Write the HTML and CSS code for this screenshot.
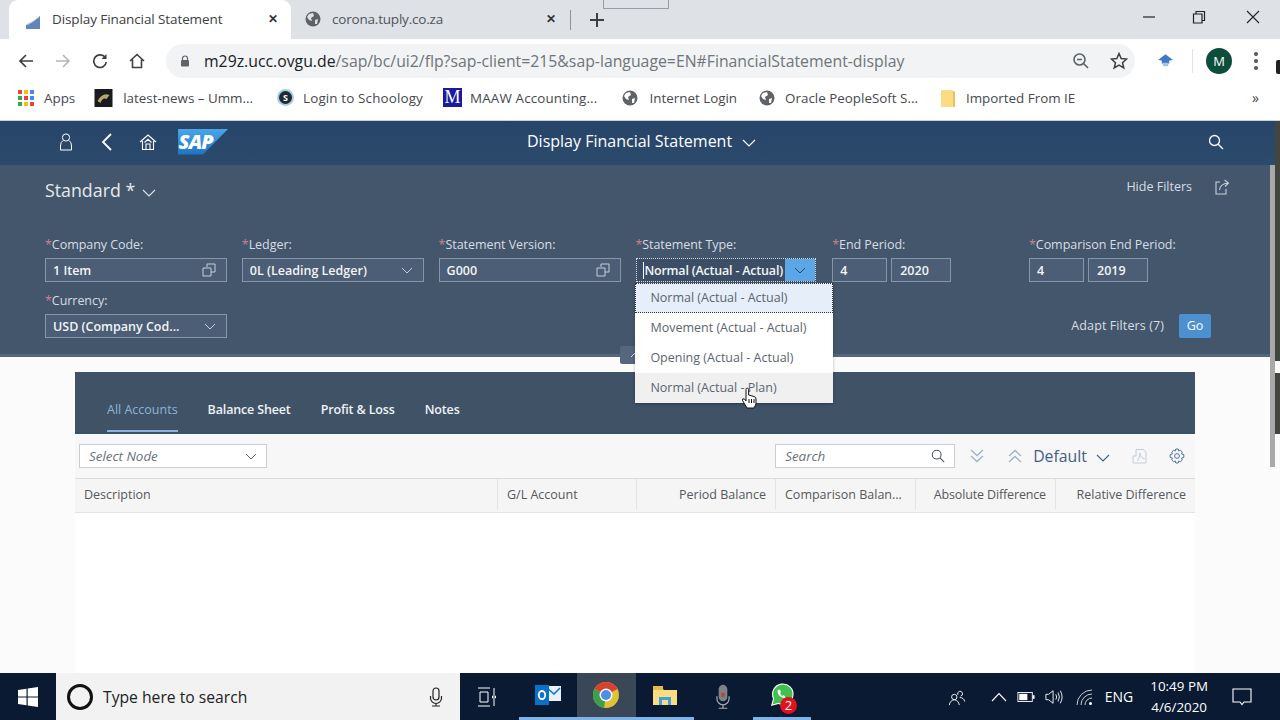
FILE: index.html
```html
<!DOCTYPE html>
<html lang="en">
<head>
    <meta charset="UTF-8">
    <title>Display Financial Statement</title>
    <link rel="stylesheet" href="styles.css">
</head>
<body>
    <div class="tabstrip">
        <div class="tab tab-active">
            <svg class="tab-icon" viewBox="0 0 16 16"><path d="M1 15 L15 15 L15 2 Q8 8 1 11 Z" fill="#5f86b8"/><path d="M2 11 Q8 8 14 3" stroke="#b9cbe0" fill="none"/></svg>
            <span class="tab-title">Display Financial Statement</span>
            <span class="tab-close">✕</span>
        </div>
        <div class="tab tab-other">
            <svg class="tab-icon globe" viewBox="0 0 16 16"><circle cx="8" cy="8" r="7.5" fill="#5f6368"/><path d="M4 3 L8 2 L9 5 L6 7 L7 10 L4 9 L2 6 Z M10 9 L13 8 L12 13 L10 13 Z" fill="#dee1e6"/></svg>
            <span class="tab-title dim">corona.tuply.co.za</span>
            <span class="tab-close">✕</span>
        </div>
        <div class="tab-sep"></div>
        <svg class="new-tab" viewBox="0 0 14 14"><path d="M7 0 V14 M0 7 H14" stroke="#3c4043" stroke-width="2"/></svg>
        <div class="drag-mark"></div>
        <div class="win-controls">
            <svg viewBox="0 0 14 14"><path d="M1 7 H13" stroke="#222" stroke-width="1.2"/></svg>
            <svg viewBox="0 0 14 14"><path d="M1.5 4 H10 V13 H1.5 Z M4 4 V1.5 H12.5 V10.5 H10" stroke="#222" stroke-width="1.2" fill="none"/></svg>
            <svg viewBox="0 0 14 14"><path d="M1 1 L13 13 M13 1 L1 13" stroke="#222" stroke-width="1.1"/></svg>
        </div>
    </div>

    <div class="toolbar">
        <svg class="nav-icon" viewBox="0 0 16 16"><path d="M15 8 H2 M8 2 L2 8 L8 14" stroke="#3c4043" stroke-width="1.7" fill="none"/></svg>
        <svg class="nav-icon" viewBox="0 0 16 16"><path d="M1 8 H14 M8 2 L14 8 L8 14" stroke="#b4b7bb" stroke-width="1.7" fill="none"/></svg>
        <svg class="nav-icon" viewBox="0 0 16 16"><path d="M13.5 5 A6.3 6.3 0 1 0 14.3 9" stroke="#3c4043" stroke-width="1.7" fill="none"/><path d="M14.5 1 V6 H9.5 Z" fill="#3c4043"/></svg>
        <svg class="nav-icon" viewBox="0 0 16 16"><path d="M1 8 L8 1.5 L15 8 M3.5 6.5 V14.5 H12.5 V6.5" stroke="#3c4043" stroke-width="1.6" fill="none"/></svg>
        <div class="omnibox">
            <svg class="lock" viewBox="0 0 10 12"><path d="M2.5 5 V3.5 A2.5 2.5 0 0 1 7.5 3.5 V5" stroke="#5f6368" stroke-width="1.2" fill="none"/><rect x="1" y="5" width="8" height="6.5" rx="1" fill="#5f6368"/></svg>
            <span class="url"><span class="host">m29z.ucc.ovgu.de</span>/sap/bc/ui2/flp?sap-client=215&amp;sap-language=EN#FinancialStatement-display</span>
            <svg class="omni-icon" viewBox="0 0 18 18"><circle cx="7.5" cy="7.5" r="5.5" stroke="#5f6368" stroke-width="1.6" fill="none"/><path d="M5 7.5 H10 M11.5 11.5 L16 16" stroke="#5f6368" stroke-width="1.6"/></svg>
            <svg class="omni-icon" viewBox="0 0 18 18"><path d="M9 1.5 L11.2 6.6 L16.6 7.1 L12.5 10.7 L13.8 16 L9 13.2 L4.2 16 L5.5 10.7 L1.4 7.1 L6.8 6.6 Z" stroke="#3c4043" stroke-width="1.5" fill="none"/></svg>
        </div>
        <svg class="ext-icon" viewBox="0 0 16 16"><path d="M8 2 L15 7.5 L11.5 8 V11 H4.5 V8 L1 7.5 Z" fill="#3f78c9"/><path d="M4.5 10 H11.5 L10 13.5 H6 Z" fill="#a5c4ea"/></svg>
        <div class="toolbar-sep"></div>
        <div class="avatar">M</div>
        <div class="kebab"><i></i><i></i><i></i></div>
    </div>

    <div class="bookmarks">
        <div class="bm bm-apps">
            <div class="apps-grid"><i class="c1"></i><i class="c2"></i><i class="c3"></i><i class="c4"></i><i class="c5"></i><i class="c6"></i><i class="c7"></i><i class="c2"></i><i class="c8"></i></div>
            <span>Apps</span>
        </div>
        <div class="bm bm-news">
            <svg class="bm-icon" viewBox="0 0 18 18"><rect width="18" height="18" fill="#1a1a22"/><path d="M3 12 Q8 3 15 6 L12 10 Q8 8 6 14 Z" fill="#b5a868"/></svg>
            <span>latest-news – Umm...</span>
        </div>
        <div class="bm bm-school">
            <div class="schoology">S</div>
            <span>Login to Schoology</span>
        </div>
        <div class="bm bm-maaw">
            <div class="maaw">M</div>
            <span>MAAW Accounting...</span>
        </div>
        <div class="bm bm-login">
            <svg class="bm-icon globe" viewBox="0 0 16 16"><circle cx="8" cy="8" r="7.5" fill="#5f6368"/><path d="M4 3 L8 2 L9 5 L6 7 L7 10 L4 9 L2 6 Z M10 9 L13 8 L12 13 L10 13 Z" fill="#fff"/></svg>
            <span>Internet Login</span>
        </div>
        <div class="bm">
            <svg class="bm-icon globe" viewBox="0 0 16 16"><circle cx="8" cy="8" r="7.5" fill="#5f6368"/><path d="M4 3 L8 2 L9 5 L6 7 L7 10 L4 9 L2 6 Z M10 9 L13 8 L12 13 L10 13 Z" fill="#fff"/></svg>
            <span>Oracle PeopleSoft S...</span>
        </div>
        <div class="bm">
            <svg class="bm-icon folder" viewBox="0 0 14 18"><path d="M0 1 H10 L14 3 V18 H0 Z" fill="#fbdc83"/><path d="M10 1 L14 3 V18 H12 V3 Z" fill="#e9c25d"/></svg>
            <span>Imported From IE</span>
        </div>
        <div class="bm-more">»</div>
    </div>

    <div class="app">
        <header class="shell">
            <div class="shell-left">
                <svg class="shell-icon" viewBox="0 0 16 20"><circle cx="8" cy="5.5" r="3.6" stroke="#fff" fill="none"/><path d="M5 8.5 Q2.5 10 2.5 14 V18 H13.5 V14 Q13.5 10 11 8.5" stroke="#fff" fill="none"/></svg>
                <svg class="shell-icon" viewBox="0 0 16 20"><path d="M12 2 L4 10 L12 18" stroke="#fff" stroke-width="1.8" fill="none"/></svg>
                <svg class="shell-icon home" viewBox="0 0 18 18"><path d="M1 9 L9 2 L17 9 M3.5 8 V16.5 H14.5 V8 M7 16.5 V11 H11 V16.5 M5.5 9.5 L9 6.3 L12.5 9.5" stroke="#fff" stroke-width="1.1" fill="none"/></svg>
                <div class="sap-logo"><span>SAP</span></div>
            </div>
            <div class="shell-title">Display Financial Statement
                <svg class="chev-lg" viewBox="0 0 14 8"><path d="M1 1 L7 7 L13 1" stroke="#fff" stroke-width="1.2" fill="none"/></svg>
            </div>
            <svg class="shell-search" viewBox="0 0 16 16"><circle cx="6.5" cy="6.5" r="5" stroke="#fff" stroke-width="1.3" fill="none"/><path d="M10.2 10.2 L15 15" stroke="#fff" stroke-width="1.3"/></svg>
        </header>

        <section class="filterbar">
            <div class="filter-top">
                <div class="variant">Standard *
                    <svg class="chev-lg" viewBox="0 0 14 8"><path d="M1 1 L7 7 L13 1" stroke="#dfe5ec" stroke-width="1.1" fill="none"/></svg>
                </div>
                <div class="filter-actions">
                    <span>Hide Filters</span>
                    <svg class="share" viewBox="0 0 16 16"><path d="M6 3 H2 V15 H12 V10" stroke="#c6d0da" stroke-width="1.1" fill="none"/><path d="M5.5 11 Q6 5 14 4 M10.5 1 L14.5 4 L11 7.5" stroke="#c6d0da" stroke-width="1.1" fill="none"/></svg>
                </div>
            </div>
            <div class="filter-grid">
                <div class="field">
                    <label><b>*</b>Company Code:</label>
                    <div class="input"><span class="val">1 Item</span>
                        <svg class="value-help" viewBox="0 0 14 14"><path d="M5 4 V1 H13 V9 H9 M1 5 H9 V13 H1 Z" stroke="#c6d0da" fill="none"/></svg>
                    </div>
                </div>
                <div class="field">
                    <label><b>*</b>Ledger:</label>
                    <div class="input"><span class="val">0L (Leading Ledger)</span>
                        <svg class="chev" viewBox="0 0 12 7"><path d="M1 1 L6 6 L11 1" stroke="#c6d0da" fill="none"/></svg>
                    </div>
                </div>
                <div class="field">
                    <label><b>*</b>Statement Version:</label>
                    <div class="input"><span class="val">G000</span>
                        <svg class="value-help" viewBox="0 0 14 14"><path d="M5 4 V1 H13 V9 H9 M1 5 H9 V13 H1 Z" stroke="#c6d0da" fill="none"/></svg>
                    </div>
                </div>
                <div class="field">
                    <label><b>*</b>Statement Type:</label>
                    <div class="input input-open"><span class="val">Normal (Actual - Actual)</span>
                        <span class="open-btn"><svg class="chev" viewBox="0 0 12 7"><path d="M1 1 L6 6 L11 1" stroke="#24476b" fill="none"/></svg></span>
                    </div>
                    <ul class="dropdown">
                        <li class="selected">Normal (Actual - Actual)</li>
                        <li>Movement (Actual - Actual)</li>
                        <li>Opening (Actual - Actual)</li>
                        <li class="hovered">Normal (Actual - Plan)</li>
                    </ul>
                </div>
                <div class="field">
                    <label><b>*</b>End Period:</label>
                    <div class="pair">
                        <div class="input small"><span class="val">4</span></div>
                        <div class="input wide"><span class="val">2020</span></div>
                    </div>
                </div>
                <div class="field">
                    <label><b>*</b>Comparison End Period:</label>
                    <div class="pair">
                        <div class="input small"><span class="val">4</span></div>
                        <div class="input wide"><span class="val">2019</span></div>
                    </div>
                </div>
                <div class="field">
                    <label><b>*</b>Currency:</label>
                    <div class="input"><span class="val">USD (Company Cod...</span>
                        <svg class="chev" viewBox="0 0 12 7"><path d="M1 1 L6 6 L11 1" stroke="#c6d0da" fill="none"/></svg>
                    </div>
                </div>
                <div class="go-wrap">
                    <span class="adapt">Adapt Filters (7)</span>
                    <span class="go-btn">Go</span>
                </div>
            </div>
        </section>
        <div class="collapse-tab">
            <svg viewBox="0 0 10 6"><path d="M1 5 L5 1 L9 5" stroke="#d7dee6" fill="none"/></svg>
        </div>

        <main class="content">
            <div class="panel">
                <nav class="tabs">
                    <span class="obj-tab current">All Accounts</span>
                    <span class="obj-tab">Balance Sheet</span>
                    <span class="obj-tab">Profit &amp; Loss</span>
                    <span class="obj-tab">Notes</span>
                </nav>
                <div class="table-tools">
                    <div class="tool-input node"><em>Select Node</em>
                        <svg class="chev" viewBox="0 0 12 7"><path d="M1 1 L6 6 L11 1" stroke="#5c6670" fill="none"/></svg>
                    </div>
                    <div class="tool-right">
                        <div class="tool-input search"><em>Search</em>
                            <svg class="search-icon" viewBox="0 0 16 16"><circle cx="6.5" cy="6.5" r="5" stroke="#4a5560" stroke-width="1.2" fill="none"/><path d="M10.2 10.2 L15 15" stroke="#4a5560" stroke-width="1.2"/></svg>
                        </div>
                        <svg class="tool-icon expand" viewBox="0 0 16 16"><path d="M2 2 L8 7.5 L14 2 M2 8 L8 13.5 L14 8" stroke="#9db3c9" stroke-width="1.3" fill="none"/></svg>
                        <svg class="tool-icon collapse" viewBox="0 0 16 16"><path d="M2 8 L8 2.5 L14 8 M2 14 L8 8.5 L14 14" stroke="#9db3c9" stroke-width="1.3" fill="none"/></svg>
                        <span class="default-view">Default
                            <svg class="chev-lg" viewBox="0 0 14 8"><path d="M1 1 L7 7 L13 1" stroke="#3f6188" stroke-width="1.1" fill="none"/></svg>
                        </span>
                        <svg class="tool-icon pdf" viewBox="0 0 16 16"><path d="M5 8 V1.5 H12 L15 4 V15 H2 V8 Z" stroke="#c3ced9" fill="none"/><path d="M6 13 Q9 10 9 5 Q9 10 14 11" stroke="#c3ced9" fill="none"/></svg>
                        <svg class="tool-icon gear" viewBox="0 0 16 16"><circle cx="8" cy="8" r="2.4" stroke="#4f7299" fill="none"/><path d="M6.8 1 H9.2 L9.7 3 L11.5 2.3 L13.3 4 L12.5 5.9 L14.8 6.6 V9.4 L12.5 10.1 L13.3 12 L11.5 13.7 L9.7 13 L9.2 15 H6.8 L6.3 13 L4.5 13.7 L2.7 12 L3.5 10.1 L1.2 9.4 V6.6 L3.5 5.9 L2.7 4 L4.5 2.3 L6.3 3 Z" stroke="#4f7299" fill="none"/></svg>
                    </div>
                </div>
                <div class="thead">
                    <div class="th c-desc">Description</div>
                    <div class="th c-gl">G/L Account</div>
                    <div class="th c-gl end">Period Balance</div>
                    <div class="th c-num">Comparison Balan...</div>
                    <div class="th c-num end tight">Absolute Difference</div>
                    <div class="th c-gl end last">Relative Difference</div>
                </div>
                <div class="tbody"></div>
            </div>
        </main>
        <div class="scrollbar"></div>
        <div class="edge-strip edge-top"></div>
        <div class="edge-strip edge-mid"></div>
    </div>

    <footer class="taskbar">
        <div class="start">
            <svg viewBox="0 0 20 20"><path d="M0 3 L8.5 1.8 V9.5 H0 Z M9.7 1.6 L20 0 V9.5 H9.7 Z M0 10.5 H8.5 V18.2 L0 17 Z M9.7 10.5 H20 V20 L9.7 18.4 Z" fill="#fff"/></svg>
        </div>
        <div class="task-search">
            <div class="cortana"></div>
            <span class="task-search-text">Type here to search</span>
            <svg class="mic" viewBox="0 0 14 20"><rect x="4" y="1" width="6" height="12" rx="3" stroke="#222" stroke-width="1.2" fill="none"/><path d="M1.5 9 V11 A5.5 5.5 0 0 0 12.5 11 V9 M7 16 V19 M3 19 H11" stroke="#222" stroke-width="1.2" fill="none"/></svg>
        </div>
        <div class="task-apps">
            <div class="task-app task-view">
                <svg viewBox="0 0 20 20"><path d="M1 1 H13 M1 19 H13 M3 5 H11 V15 H3 Z M17 1 V8 M17 12 V19 M15.5 9 H18.5 V11 H15.5 Z" stroke="#fff" fill="none"/></svg>
            </div>
            <div class="task-app running">
                <svg viewBox="0 0 26 24"><rect x="11" y="3" width="15" height="15" fill="#e6f1fb"/><path d="M12 5 L19 11 L25 5" stroke="#0a72c6" fill="none" stroke-width="1.5"/><rect x="0" y="2" width="14" height="20" fill="#0a72c6"/><ellipse cx="7" cy="12" rx="3.2" ry="4" stroke="#fff" stroke-width="1.8" fill="none"/></svg>
            </div>
            <div class="task-app running active">
                <svg viewBox="0 0 26 26"><circle cx="13" cy="13" r="13" fill="#e0c13a"/><path d="M13 13 L1.5 7 A13 13 0 0 1 24.5 7 Z" fill="#d8412f"/><path d="M13 13 L1.5 7 A13 13 0 0 0 11 26 Z" fill="#3c9f4d"/><circle cx="13" cy="13" r="6.5" fill="#fff"/><circle cx="13" cy="13" r="5" fill="#4b8fe8"/></svg>
            </div>
            <div class="task-app running">
                <svg viewBox="0 0 26 24"><path d="M1 5 H10 L12 7 H25 V22 H1 Z" fill="#fbdc83"/><rect x="1" y="3" width="10" height="4" fill="#e6bb4d"/><path d="M7 22 V14 H19 V22 H16 V17 H10 V22 Z" fill="#3da2dd"/></svg>
            </div>
            <div class="task-app">
                <svg viewBox="0 0 18 30"><rect x="4" y="1" width="10" height="19" rx="5" fill="#7b818a"/><rect x="7" y="10" width="4" height="5" fill="#b5482c"/><path d="M2 14 V17 A7 7 0 0 0 16 17 V14 M9 24 V28 M4 28 H14" stroke="#a8adb3" stroke-width="1.4" fill="none"/></svg>
            </div>
            <div class="task-app running">
                <svg viewBox="0 0 28 28"><path d="M3 25 L5 18 A11 11 0 1 1 10 23 Z" fill="#3fc04f" stroke="#fff" stroke-width="1.2"/><path d="M9 9 Q10 18 18 17 L16 14 L14 15 L12 12 L13 10 L11 8 Z" fill="#fff"/></svg>
                <span class="task-badge">2</span>
            </div>
        </div>
        <div class="tray">
            <svg class="tray-icon people" viewBox="0 0 20 20"><circle cx="7" cy="10" r="3" stroke="#fff" fill="none"/><path d="M1.5 19 Q2 14 7 13 Q12 14 12.5 19 M11 7.5 A2.7 2.7 0 1 1 14 9 M13 10.5 Q18 11 18.5 15" stroke="#fff" fill="none"/></svg>
            <svg class="tray-icon caret" viewBox="0 0 16 10"><path d="M1 9 L8 1.5 L15 9" stroke="#fff" stroke-width="1.1" fill="none"/></svg>
            <svg class="tray-icon battery" viewBox="0 0 20 12"><rect x="1" y="1" width="16" height="10" stroke="#fff" fill="none"/><rect x="2.5" y="2.5" width="9" height="7" fill="#fff"/><rect x="17.5" y="4" width="2" height="4" fill="#fff"/></svg>
            <svg class="tray-icon volume" viewBox="0 0 20 18"><path d="M1 6 H4 L9 2 V16 L4 12 H1 Z" stroke="#fff" fill="none"/><path d="M12 6 Q14 9 12 12 M14.5 4 Q17.5 9 14.5 14 M17 2 Q21 9 17 16" stroke="#fff" fill="none"/></svg>
            <svg class="tray-icon wifi" viewBox="0 0 18 18"><path d="M2 17 A15 15 0 0 1 17 2 M6 17 A11 11 0 0 1 17 6 M10 17 A7 7 0 0 1 17 10" stroke="#c8ccd2" fill="none"/><circle cx="15.5" cy="15.5" r="1.5" fill="#fff"/></svg>
            <span class="lang">ENG</span>
            <div class="clock"><span>10:49 PM</span><span>4/6/2020</span></div>
            <svg class="tray-icon notif" viewBox="0 0 20 18"><path d="M1 1 H19 V14 H12 L10 16.5 L8 14 H1 Z" stroke="#fff" stroke-width="1.1" fill="none"/></svg>
        </div>
    </footer>

    <!-- things that lie over the page -->
    <svg class="hand-cursor" viewBox="0 0 16 22"><path d="M5 10 V2.5 A1.3 1.3 0 0 1 7.6 2.5 V8 L13 9.5 Q15 10 15 12 V17 L13 21 H6 L1.5 13.5 Q1 11 3.5 12 L5 14 Z" fill="#fff" stroke="#111"/><path d="M8 12 V16 M10.5 12 V16 M13 12 V16" stroke="#111"/></svg>
    <div class="mouse-blip"></div>
</body>
</html>
```

FILE: styles.css
```css
* {
    margin: 0;
    padding: 0;
    box-sizing: border-box;
}

body {
    position: relative;
    display: flex;
    flex-direction: column;
    width: 1280px;
    height: 720px;
    overflow: hidden;
    background: #fff;
    font-family: "Open Sans", "Noto Sans", sans-serif;
    color: #3c4043;
}

/* browser chrome */
.tabstrip {
    position: relative;
    display: flex;
    align-items: center;
    height: 39px;
    background: #dee1e6;
    padding-left: 9px;
}

.tab {
    display: flex;
    align-items: center;
    width: 282px;
    height: 39px;
    padding: 0 13px 2px 16px;
    font-size: 13.5px;
}

.tab-active {
    background: #fff;
    border-radius: 9px 9px 0 0;
}

.tab-other {
    width: 280px;
    padding: 0 15px 2px 14px;
}

.tab-icon {
    width: 16px;
    height: 16px;
    margin-right: 11px;
    flex: none;
}

.tab-active .tab-icon {
    margin-top: 7px;
}

.tab-title {
    flex: 1;
    letter-spacing: -0.1px;
}

.tab-title.dim {
    color: #50545a;
    letter-spacing: -0.2px;
}

.tab-close {
    font-size: 12px;
    font-weight: 700;
    color: #333;
}

.tab-sep {
    width: 1px;
    height: 20px;
    background: #8e9196;
    margin-left: -1px;
}

.new-tab {
    width: 14px;
    height: 14px;
    margin-left: 19px;
}

.drag-mark {
    position: absolute;
    left: 603px;
    top: 0;
    width: 66px;
    height: 9px;
    border: 1px solid #9a9da3;
    border-top: 0;
}

.win-controls {
    display: flex;
    gap: 38px;
    margin-left: auto;
    margin-right: 20px;
    margin-top: -5px;
}

.win-controls svg {
    width: 14px;
    height: 14px;
}

.win-controls svg:nth-child(2) {
    margin: 0 2px 0 -2px;
}

.toolbar {
    display: flex;
    align-items: center;
    height: 43px;
    background: #fff;
    padding-left: 18px;
}

.nav-icon {
    width: 16px;
    height: 16px;
    margin-right: 21px;
    flex: none;
}

.omnibox {
    display: flex;
    align-items: center;
    width: 969px;
    height: 34px;
    background: #f1f3f4;
    border-radius: 17px;
    padding: 0 7px 0 14px;
}

.lock {
    width: 10px;
    height: 12px;
    margin-right: 14px;
}

.url {
    flex: 1;
    font-size: 15.8px;
    color: #70757a;
    white-space: nowrap;
}

.host {
    color: #202124;
}

.omni-icon {
    width: 18px;
    height: 18px;
    margin-left: 20px;
}

.ext-icon {
    width: 17px;
    height: 17px;
    margin-left: 22px;
}

.toolbar-sep {
    width: 1px;
    height: 24px;
    background: #e0e2e5;
    margin-left: 18px;
}

.avatar {
    width: 26px;
    height: 26px;
    margin-left: 13px;
    border-radius: 50%;
    background: #0d4d3c;
    color: #fff;
    font-size: 13px;
    text-align: center;
    line-height: 26px;
}

.kebab {
    display: flex;
    flex-direction: column;
    gap: 3px;
    margin-left: 22px;
}

.kebab i {
    width: 4px;
    height: 4px;
    border-radius: 50%;
    background: #555;
}

.bookmarks {
    display: flex;
    align-items: center;
    height: 39px;
    background: #fff;
    padding: 0 0 7px 18px;
    font-size: 13.4px;
    color: #45494e;
    border-bottom: 1px solid #c9d2dc;
}

.bm {
    display: flex;
    align-items: center;
    gap: 10px;
    margin-right: 22px;
}

.bm-apps {
    margin-right: 19px;
}

.bm-news {
    margin-right: 24px;
}

.bm-school {
    gap: 9px;
    margin-right: 20px;
    letter-spacing: 0.15px;
}

.bm-maaw {
    gap: 8px;
    margin-right: 25px;
    letter-spacing: 0.15px;
}

.bm-login {
    gap: 11px;
}

.apps-grid {
    display: grid;
    grid-template-columns: repeat(3, 4px);
    gap: 2px;
}

.apps-grid i {
    width: 4px;
    height: 4px;
}

.c1 { background: #ea4335; }
.c2 { background: #fbbc05; }
.c3 { background: #4285f4; }
.c4 { background: #34a853; }
.c5 { background: #ea4335; }
.c6 { background: #4285f4; }
.c7 { background: #34a853; }
.c8 { background: #ea4335; }

.bm-icon {
    width: 19px;
    height: 18px;
}

.bm-icon.globe {
    width: 16px;
    height: 16px;
}

.bm-icon.folder {
    width: 16px;
    height: 18px;
}

.schoology {
    width: 17px;
    height: 17px;
    border-radius: 50%;
    background: #1f2a33;
    border: 2px solid #9fd0e8;
    color: #fff;
    font-size: 9px;
    font-weight: 700;
    line-height: 13px;
    text-align: center;
}

.maaw {
    width: 19px;
    height: 19px;
    background: #1a1aa0;
    color: #fff;
    font-family: "Liberation Serif", serif;
    font-size: 18px;
    line-height: 19px;
    text-align: center;
}

.bm-more {
    margin-left: auto;
    margin-right: 21px;
    font-size: 14px;
}

/* fiori app */
.app {
    position: relative;
    flex: 1;
    min-height: 0;
    font-size: 12.5px;
    background: #fbfbfb;
}

.shell {
    display: flex;
    align-items: center;
    height: 44px;
    padding: 0 56px 5px 58px;
    background: linear-gradient(#264568, #2c4a6c);
    color: #fff;
}

.shell-left {
    display: flex;
    align-items: center;
    gap: 24.5px;
    width: 280px;
    margin-top: 2px;
}

.shell-icon {
    width: 16px;
    height: 20px;
}

.shell-icon.home {
    width: 18px;
    height: 18px;
}

.sap-logo {
    flex: none;
    width: 51px;
    height: 26px;
    margin-left: -4px;
    background: linear-gradient(#4aa6e8, #1c74c4);
    clip-path: polygon(0 0, 100% 0, 50% 100%, 0 100%);
    color: #fff;
    font-size: 20px;
    font-weight: 800;
    font-style: italic;
    line-height: 26px;
    padding-left: 1px;
    letter-spacing: -0.8px;
}

.shell-title {
    flex: 1;
    padding-left: 189px;
    font-size: 16px;
}

.chev-lg {
    width: 14px;
    height: 8px;
    margin-left: 6px;
}

.shell-search {
    width: 16px;
    height: 16px;
    margin-top: 2px;
}

.filterbar {
    height: 192px;
    padding: 0 0 0 45px;
    background: #44566b;
    border-bottom: 3px solid #54677e;
    color: #e2e7ec;
}

.filter-top {
    display: flex;
    justify-content: space-between;
    align-items: center;
    height: 50px;
    width: 1185px;
}

.variant {
    font-size: 17.8px;
    color: #e6eaee;
}

.variant .chev-lg {
    margin-left: 2px;
}

.filter-actions {
    display: flex;
    align-items: center;
    gap: 22px;
    margin-top: -7px;
    color: #d7dee6;
}

.share {
    width: 16px;
    height: 16px;
}

.filter-grid {
    display: grid;
    grid-template-columns: repeat(6, 182px);
    column-gap: 14.8px;
    row-gap: 11px;
    margin-top: 22px;
}

.field {
    position: relative;
}

.field label {
    display: block;
    height: 21px;
    line-height: 15px;
    color: #d6dde5;
    white-space: nowrap;
    letter-spacing: -0.05px;
}

.field label b {
    color: #cf7f8e;
    font-weight: 400;
}

.input {
    display: flex;
    align-items: center;
    justify-content: space-between;
    height: 24px;
    padding: 0 10px 0 7px;
    background: #4b5e75;
    border: 1px solid #8396aa;
    color: #f2f4f6;
    font-weight: 600;
}

.val {
    white-space: nowrap;
    font-size: 12.5px;
}

.chev {
    width: 12px;
    height: 7px;
}

.value-help {
    width: 14px;
    height: 14px;
}

.input-open {
    width: 180px;
    margin-left: 1px;
    background: #3b4e66;
    border: 1px dotted #d6dde5;
    padding: 0 0 0 6px;
}

.input-open .val {
    letter-spacing: -0.2px;
    border-left: 1px solid #f2f4f6;
}

.open-btn {
    display: flex;
    align-items: center;
    justify-content: center;
    width: 30px;
    height: 22px;
    background: #5aa6e6;
}

.dropdown {
    position: absolute;
    left: 0;
    top: 46px;
    z-index: 5;
    width: 198px;
    list-style: none;
    background: #fff;
    border-radius: 0 0 3px 3px;
    box-shadow: 0 1px 3px rgba(0, 0, 0, 0.3);
    color: #5b6570;
}

.dropdown li {
    height: 30px;
    line-height: 30px;
    padding-left: 15px;
}

.dropdown .selected {
    background: #e5eef9;
    outline: 1px dotted #333;
    outline-offset: -1px;
}

.dropdown .hovered {
    background: #f0f0f0;
}

.pair {
    display: flex;
    gap: 4px;
}

.small {
    width: 55px;
}

.wide {
    width: 60px;
    padding-left: 8px;
}

.go-wrap {
    grid-column: 2 / 7;
    display: flex;
    justify-content: flex-end;
    align-items: flex-end;
    gap: 15px;
}

.adapt {
    color: #d7dee6;
    line-height: 24px;
    letter-spacing: 0.1px;
}

.go-btn {
    width: 32px;
    height: 24px;
    border-radius: 2px;
    background: #4c90d0;
    color: #fff;
    line-height: 24px;
    text-align: center;
}

.collapse-tab {
    position: absolute;
    left: 620px;
    top: 225px;
    display: flex;
    align-items: center;
    justify-content: center;
    width: 30px;
    height: 18px;
    background: #54677e;
    border-radius: 2px;
}

.collapse-tab svg {
    width: 10px;
    height: 6px;
}

.content {
    padding: 15px 85px 0 75px;
}

.panel {
    width: 1120px;
}

.tabs {
    display: flex;
    gap: 30px;
    height: 62px;
    padding: 20px 0 0 32px;
    background: #3f5266;
    color: #f0f3f6;
    font-weight: 600;
    letter-spacing: -0.15px;
    border-bottom: 2px solid #385169;
}

.obj-tab {
    height: 40px;
    line-height: 36px;
}

.obj-tab.current {
    color: #8db2d9;
    font-weight: 400;
    letter-spacing: 0;
    border-bottom: 2px solid #8db2d9;
}

.table-tools {
    display: flex;
    align-items: center;
    justify-content: space-between;
    height: 44px;
    padding: 0 10px 0 4px;
    background: #f7f7f7;
}

.tool-input {
    display: flex;
    align-items: center;
    justify-content: space-between;
    height: 24px;
    padding: 0 9px;
    background: #fff;
    border: 1px solid #c9cdd1;
    color: #6a7178;
}

.tool-input em {
    font-size: 13.4px;
}

.node {
    width: 188px;
}

.search {
    width: 180px;
}

.chev,
.search-icon {
    flex: none;
}

.search-icon {
    width: 14px;
    height: 14px;
}

.tool-right {
    display: flex;
    align-items: center;
}

.tool-icon {
    width: 16px;
    height: 16px;
}

.expand {
    margin-left: 14px;
}

.collapse {
    margin-left: 22px;
}

.default-view {
    margin-left: 10px;
    color: #3f6188;
    font-size: 15.8px;
}

.default-view .chev-lg {
    margin-left: 5px;
}

.pdf {
    margin-left: 21px;
}

.gear {
    margin-left: 22px;
}

.thead {
    display: flex;
    height: 35px;
    padding-bottom: 2px;
    background: #f5f5f5;
    border-top: 1px solid #dcdcdc;
    border-bottom: 1px solid #e3e3e3;
    color: #55595e;
}

.th {
    display: flex;
    align-items: center;
    padding: 0 9px;
    border-right: 1px solid #e4e4e4;
    white-space: nowrap;
}

.th.end {
    justify-content: flex-end;
}

.th.tight {
    letter-spacing: -0.15px;
}

.th.last {
    border-right: 0;
}

.c-desc {
    width: 423px;
}

.c-gl {
    width: 139px;
}

.c-num {
    width: 140px;
}

.tbody {
    height: 160px;
    background: #fff;
}

.scrollbar {
    position: absolute;
    right: 5px;
    top: 44px;
    width: 5px;
    height: 302px;
    background: #a9a9a9;
}

.edge-strip {
    position: absolute;
    right: 0;
    width: 5px;
    background: #43453f;
}

.edge-top {
    top: 0;
    height: 240px;
}

.edge-mid {
    top: 252px;
    height: 61px;
}

/* windows taskbar */
.taskbar {
    display: flex;
    align-items: center;
    height: 47px;
    background: #0a1a33;
    color: #fff;
}

.start {
    display: flex;
    align-items: center;
    justify-content: center;
    width: 56px;
}

.start svg {
    width: 20px;
    height: 20px;
}

.task-search {
    display: flex;
    align-items: center;
    width: 404px;
    height: 47px;
    padding: 0 16px 0 11px;
    background: #f2f2f2;
    color: #222;
    font-size: 15.7px;
}

.cortana {
    width: 26px;
    height: 26px;
    border-radius: 50%;
    border: 3px solid #111;
}

.task-search-text {
    flex: 1;
    margin-left: 10px;
}

.mic {
    width: 16px;
    height: 20px;
}

.task-apps {
    display: flex;
}

.task-app {
    position: relative;
    display: flex;
    align-items: center;
    justify-content: center;
    width: 58.5px;
    height: 47px;
}

.task-app svg {
    width: 26px;
    height: 26px;
}

.task-view {
    padding-right: 4px;
}

.task-view svg {
    width: 20px;
    height: 20px;
}

.task-app.running {
    border-bottom: 3px solid #7eb3e8;
}

.task-app.active {
    background: #3a4757;
}

.task-badge {
    position: absolute;
    right: 14px;
    bottom: 3px;
    width: 17px;
    height: 17px;
    border-radius: 50%;
    background: #e2111b;
    font-size: 13px;
    line-height: 17px;
    text-align: center;
}

.tray {
    display: flex;
    align-items: center;
    margin-left: auto;
    padding-right: 28px;
    font-size: 14px;
}

.tray-icon {
    width: 18px;
    height: 18px;
}

.caret {
    width: 16px;
    height: 10px;
    margin-left: 25px;
}

.battery,
.volume {
    margin-left: 10px;
}

.wifi {
    margin-left: 12px;
}

.lang {
    margin-left: 12px;
}

.clock {
    display: flex;
    flex-direction: column;
    align-items: center;
    gap: 1px;
    margin: 0 24px 0 17px;
    font-size: 13.4px;
    line-height: 20px;
}

.notif {
    width: 20px;
    height: 18px;
}

/* mouse pointer */
.hand-cursor {
    position: absolute;
    left: 741px;
    top: 387px;
    z-index: 10;
    width: 16px;
    height: 22px;
}

.mouse-blip {
    position: absolute;
    left: 1276px;
    top: 60px;
    width: 4px;
    height: 14px;
    background: #222;
    border-radius: 2px 0 0 2px;
}
```
